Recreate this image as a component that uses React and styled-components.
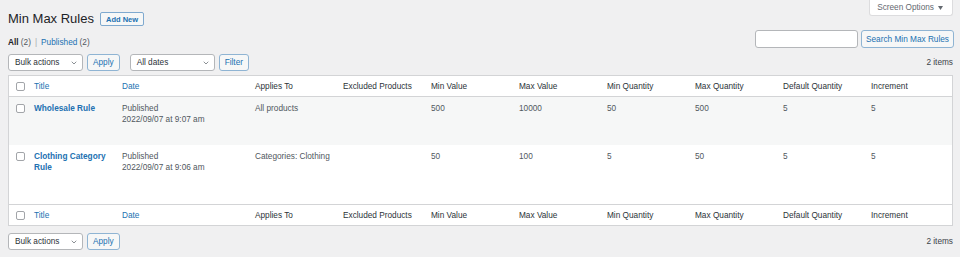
import React from "react";
import styled, { createGlobalStyle } from "styled-components";
import { ChevronDown } from "lucide-react";

const GlobalStyle = createGlobalStyle`
  * { box-sizing: border-box; }
  body {
    margin: 0;
    background: #f0f0f1;
    font-family: "Liberation Sans", Arial, sans-serif;
    font-size: 8.25px;
    color: #3c434a;
  }
`;

const Wrap = styled.div`
  padding: 0 7px 0 8px;
`;

const HeaderRow = styled.div`
  display: flex;
  justify-content: space-between;
  align-items: flex-start;
  height: 27px;
`;

const TitleGroup = styled.div`
  display: flex;
  align-items: center;
  gap: 6px;
  padding-top: 12px;
`;

const PageTitle = styled.h1`
  margin: 0;
  font-size: 13px;
  font-weight: 400;
  line-height: 14px;
  color: #1d2327;
`;

const AddNew = styled.a`
  display: inline-flex;
  align-items: center;
  height: 14px;
  padding: 0 5px;
  border: 1px solid #7fa9cf;
  border-radius: 2px;
  background: #f6f7f7;
  color: #2271b1;
  font-size: 7.5px;
  font-weight: 700;
  text-decoration: none;
`;

const ScreenOptions = styled.button`
  display: flex;
  align-items: center;
  gap: 4px;
  height: 16px;
  padding: 0 9px 0 7px;
  border: 1px solid #dcdcde;
  border-top: none;
  border-radius: 0 0 3px 3px;
  background: #fff;
  color: #646970;
  font: inherit;
`;

const SubRow = styled.div`
  display: flex;
  justify-content: space-between;
  align-items: flex-end;
  margin-top: 3px;
`;

const Subsubsub = styled.ul`
  display: flex;
  margin: 0 0 -1px;
  padding: 0;
  list-style: none;
  line-height: 12px;
  color: #50575e;
`;

const SubItem = styled.li`
  a {
    color: ${(p) => (p.$current ? "#1d2327" : "#2271b1")};
    font-weight: ${(p) => (p.$current ? 700 : 400)};
    text-decoration: none;
  }
`;

const Sep = styled.span`
  margin: 0 4px;
  color: #a7aaad;
`;

const SearchBox = styled.div`
  display: flex;
  gap: 3px;
  margin-right: -1px;
`;

const SearchInput = styled.input`
  width: 103px;
  height: 18px;
  border: 1px solid #b4b6b9;
  border-radius: 3px;
  background: #fff;
`;

const Button = styled.button`
  height: ${(p) => (p.$tall ? "18px" : "17px")};
  padding: 0 ${(p) => (p.$tall ? "4px" : "5px")};
  border: 1px solid #8fb4d3;
  border-radius: 3px;
  background: #f6f7f7;
  color: #2271b1;
  font: inherit;
  white-space: nowrap;
`;

const TableNav = styled.div`
  display: flex;
  justify-content: space-between;
  align-items: center;
  height: 17px;
  margin-top: ${(p) => (p.$bottom ? "7px" : "6px")};
`;

const Actions = styled.div`
  display: flex;
  gap: 4px;
  margin-right: 10px;
`;

const NavLeft = styled.div`
  display: flex;
`;

const SelectBox = styled.div`
  display: flex;
  justify-content: space-between;
  align-items: center;
  width: ${(p) => p.$w}px;
  height: 17px;
  padding: 0 4px 0 6px;
  border: 1px solid #b4b6b9;
  border-radius: 3px;
  background: #fff;
  color: #2c3338;
`;

const DisplayNum = styled.span`
  color: #3c434a;
`;

const Table = styled.table`
  width: 100%;
  margin-top: 4px;
  border: 1px solid #d3d4d6;
  border-collapse: separate;
  border-spacing: 0;
  table-layout: fixed;
  background: #fff;
`;

const Th = styled.th`
  width: ${(p) => (p.$w ? `${p.$w}px` : "auto")};
  height: 21px;
  padding: ${(p) => (p.$check ? "0 0 0 7px" : "0 5px")};
  text-align: left;
  font-weight: 400;
  line-height: 11px;
  color: ${(p) => (p.$sortable ? "#2271b1" : "#2c3338")};
  vertical-align: middle;
  border-${(p) => (p.$foot ? "top" : "bottom")}: 1px solid #d3d4d6;
`;

const Tr = styled.tr`
  background: ${(p) => (p.$striped ? "#f6f7f7" : "#fff")};
`;

const Td = styled.td`
  padding: ${(p) => (p.$check ? "7px 0 5px 7px" : "6px 5px 5px")};
  vertical-align: top;
  line-height: 11px;
  color: #50575e;
`;

const RowTitle = styled.a`
  display: block;
  color: #2271b1;
  font-weight: 700;
  text-decoration: none;
`;

const RowActions = styled.div`
  height: 26px;
`;

const Check = styled.input`
  appearance: none;
  display: block;
  width: 9px;
  height: 9px;
  margin: 0;
  border: 1px solid #a2a5a9;
  border-radius: 2px;
  background: #fff;
`;

const columns = [
  { key: "title", label: "Title", w: 88, sortable: true },
  { key: "date", label: "Date", w: 133, sortable: true },
  { key: "applies", label: "Applies To", w: 88 },
  { key: "excluded", label: "Excluded Products", w: 88 },
  { key: "minValue", label: "Min Value", w: 88 },
  { key: "maxValue", label: "Max Value", w: 88 },
  { key: "minQty", label: "Min Quantity", w: 88 },
  { key: "maxQty", label: "Max Quantity", w: 88 },
  { key: "defQty", label: "Default Quantity", w: 88 },
  { key: "increment", label: "Increment" },
];

const rules = [
  {
    title: "Wholesale Rule",
    date: "2022/09/07 at 9:07 am",
    applies: "All products",
    excluded: "",
    minValue: "500",
    maxValue: "10000",
    minQty: "50",
    maxQty: "500",
    defQty: "5",
    increment: "5",
  },
  {
    title: "Clothing Category Rule",
    date: "2022/09/07 at 9:06 am",
    applies: "Categories: Clothing",
    excluded: "",
    minValue: "50",
    maxValue: "100",
    minQty: "5",
    maxQty: "50",
    defQty: "5",
    increment: "5",
  },
];

const HeadRow = ({ foot }) => (
  <tr>
    <Th $check $w={20} $foot={foot}>
      <Check type="checkbox" />
    </Th>
    {columns.map((c) => (
      <Th key={c.key} $w={c.w} $sortable={c.sortable} $foot={foot}>
        {c.label}
      </Th>
    ))}
  </tr>
);

const BulkActions = () => (
  <Actions>
    <SelectBox $w={75}>
      Bulk actions
      <ChevronDown size={8} strokeWidth={2} color="#50575e" />
    </SelectBox>
    <Button>Apply</Button>
  </Actions>
);

export default function App() {
  return (
    <Wrap>
      <GlobalStyle />
      <HeaderRow>
        <TitleGroup>
          <PageTitle>Min Max Rules</PageTitle>
          <AddNew href="#">Add New</AddNew>
        </TitleGroup>
        <ScreenOptions>
          Screen Options
          <svg width="5" height="4" viewBox="0 0 5 4">
            <path d="M0 0h5L2.5 4z" fill="#646970" />
          </svg>
        </ScreenOptions>
      </HeaderRow>

      <SubRow>
        <Subsubsub>
          <SubItem $current>
            <a href="#">All</a> (2)
          </SubItem>
          <Sep>|</Sep>
          <SubItem>
            <a href="#">Published</a> (2)
          </SubItem>
        </Subsubsub>
        <SearchBox>
          <SearchInput type="search" />
          <Button $tall>Search Min Max Rules</Button>
        </SearchBox>
      </SubRow>

      <TableNav>
        <NavLeft>
          <BulkActions />
          <Actions>
            <SelectBox $w={85}>
              All dates
              <ChevronDown size={8} strokeWidth={2} color="#50575e" />
            </SelectBox>
            <Button>Filter</Button>
          </Actions>
        </NavLeft>
        <DisplayNum>2 items</DisplayNum>
      </TableNav>

      <Table>
        <thead>
          <HeadRow />
        </thead>
        <tbody>
          {rules.map((r, i) => (
            <Tr key={r.title} $striped={i % 2 === 0}>
              <Td $check>
                <Check type="checkbox" />
              </Td>
              <Td>
                <RowTitle href="#">{r.title}</RowTitle>
                <RowActions />
              </Td>
              <Td>
                Published
                <br />
                {r.date}
              </Td>
              <Td>{r.applies}</Td>
              <Td>{r.excluded}</Td>
              <Td>{r.minValue}</Td>
              <Td>{r.maxValue}</Td>
              <Td>{r.minQty}</Td>
              <Td>{r.maxQty}</Td>
              <Td>{r.defQty}</Td>
              <Td>{r.increment}</Td>
            </Tr>
          ))}
        </tbody>
        <tfoot>
          <HeadRow foot />
        </tfoot>
      </Table>

      <TableNav $bottom>
        <BulkActions />
        <DisplayNum>2 items</DisplayNum>
      </TableNav>
    </Wrap>
  );
}
